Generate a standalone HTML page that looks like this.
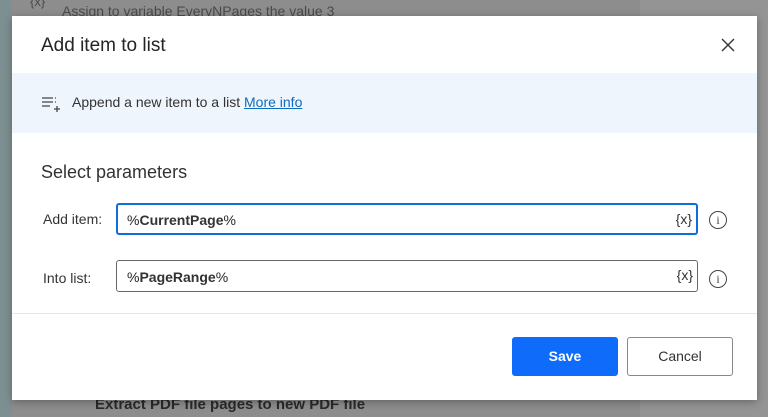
<!DOCTYPE html>
<html><head><style>
*{box-sizing:border-box;margin:0;padding:0}
body{width:768px;height:417px;overflow:hidden;background:#8d8d8d;font-family:"Liberation Sans",sans-serif;position:relative;color:#242424}
.bgl{position:absolute;left:0;top:0;width:12px;height:417px;background:#7d9091}
.bgr{position:absolute;left:640px;top:0;width:128px;height:417px;background:#949494}
.bgtop{position:absolute;left:62px;top:3px;font-size:14px;color:#4a4a4a}
.bgx{position:absolute;left:30px;top:-6px;font-size:13px;color:#4a4a4a}
.bgbot{position:absolute;left:95px;top:396px;font-size:15px;font-weight:bold;color:#2a2a2a}
.dlg{position:absolute;left:12px;top:16px;width:745px;height:384px;background:#fff;box-shadow:0 2px 8px rgba(0,0,0,.3)}
.title{position:absolute;left:29px;top:19px;font-size:19px;color:#242424}
.close{position:absolute;left:708px;top:21px}
.band{position:absolute;left:0;top:57px;width:745px;height:60px;background:#eff5fc}
.desc{position:absolute;left:60px;top:21px;font-size:14px;color:#333}
.desc a{color:#0f6cbd;text-decoration:underline}
.sp{position:absolute;left:29px;top:146px;font-size:18px;color:#333}
.lbl{position:absolute;left:31px;font-size:14px;color:#333}
.inp{position:absolute;left:104px;width:582px;height:32px;border:1px solid #666;border-radius:3px;font-size:14px;padding:8px 0 0 10px;color:#242424}
.inp.f{border:2px solid #0f6cdd;padding:7px 0 0 9px}
.inp b{font-weight:bold;color:#333}
.vx{position:absolute;right:4px;top:6px;font-size:14px;color:#333}
.info{position:absolute;left:697px;width:18px;height:18px;border:1.3px solid #444;border-radius:50%;font-size:12px;text-align:center;line-height:16px;color:#444;font-family:"Liberation Serif",serif}
.sep{position:absolute;left:0;top:297px;width:745px;height:1px;background:#e8e8e8}
.btn{position:absolute;top:321px;height:39px;border-radius:3px;font-size:14px;text-align:center;line-height:37px}
.save{left:500px;width:106px;background:#0f6cfb;color:#fff;border:1px solid #0f6cfb;font-weight:bold}
.cancel{left:615px;width:106px;background:#fff;border:1px solid #888;color:#333}
</style></head><body>
<div class="bgl"></div><div class="bgr"></div>
<div class="bgx">{x}</div>
<div class="bgtop">Assign to variable EveryNPages the value 3</div>
<div class="bgbot">Extract PDF file pages to new PDF file</div>
<div class="dlg">
<div class="title">Add item to list</div>
<svg class="close" width="16" height="16" viewBox="0 0 16 16"><path d="M2 2L14 14M14 2L2 14" stroke="#333" stroke-width="1.4"/></svg>
<div class="band">
<svg style="position:absolute;left:29px;top:22px" width="20" height="20" viewBox="0 0 20 20"><path d="M1 3H12M1 7H12M1 11H9M14 3H15M14 7H15M13 14H19M16 11V17" stroke="#444" stroke-width="1.3"/></svg>
<div class="desc">Append a new item to a list <a>More info</a></div>
</div>
<div class="sp">Select parameters</div>
<div class="lbl" style="top:195px">Add item:</div>
<div class="inp f" style="top:187px">%<b>CurrentPage</b>%<span class="vx">{x}</span></div>
<div class="info" style="top:195px">i</div>
<div class="lbl" style="top:254px">Into list:</div>
<div class="inp" style="top:244px">%<b>PageRange</b>%<span class="vx">{x}</span></div>
<div class="info" style="top:254px">i</div>
<div class="sep"></div>
<div class="btn save">Save</div>
<div class="btn cancel">Cancel</div>
</div>
</body></html>
